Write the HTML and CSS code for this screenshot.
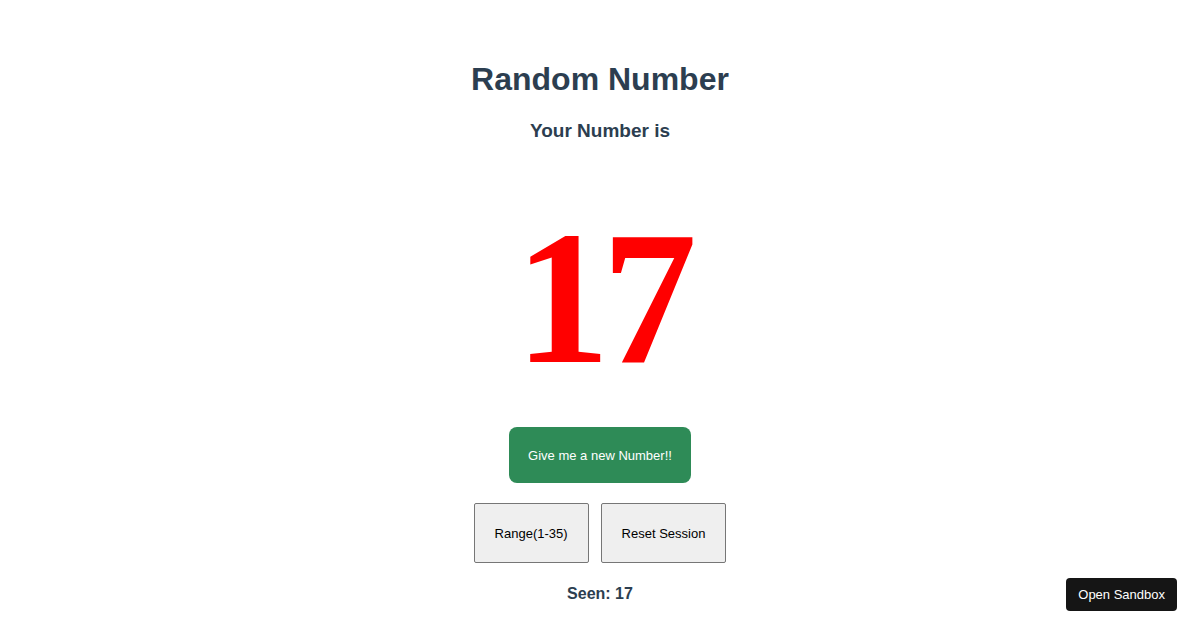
FILE: index.html
```html
<!DOCTYPE html>
<html lang="en">

<head>
    <meta charset="UTF-8">
    <meta name="viewport" content="width=device-width, initial-scale=1.0">
    <title>Random Number</title>
    <link rel="stylesheet" href="styles.css">
</head>

<body>
    <div class="app">
        <h1>Random Number</h1>
        <h3>Your Number is</h3>

        <div class="number" id="number">17</div>

        <button class="btn-new" id="newBtn">Give me a new Number!!</button>

        <div class="actions">
            <button class="btn-plain" id="rangeBtn">Range(1-35)</button>
            <button class="btn-plain" id="resetBtn">Reset Session</button>
        </div>

        <div class="seen" id="seen">Seen: 17</div>
    </div>

    <a class="sandbox" href="#">Open Sandbox</a>
</body>

</html>
```

FILE: styles.css
```css
body {
    margin: 0;
    font-family: "Liberation Sans", Arial, sans-serif;
    background-color: #fff;
}

.app {
    display: flex;
    flex-direction: column;
    align-items: center;
    padding-top: 56px;
}

h1 {
    margin: 0;
    font-size: 32px;
    line-height: 46px;
    color: #2c3e50;
}

h3 {
    margin: 17px 0 0;
    font-size: 19px;
    line-height: 24px;
    color: #2c3e50;
}

.number {
    margin-top: 55px;
    padding-left: 4px;
    font-family: "Liberation Serif", "Times New Roman", serif;
    font-weight: bold;
    font-size: 190px;
    line-height: 200px;
    letter-spacing: -8px;
    color: #ff0000;
}

.btn-new {
    margin-top: 29px;
    width: 182px;
    height: 56px;
    background-color: #2e8b57;
    color: #fff;
    border: none;
    border-radius: 8px;
    font-family: "Liberation Sans", Arial, sans-serif;
    font-size: 13px;
    cursor: pointer;
}

.actions {
    display: flex;
    gap: 12px;
    margin-top: 20px;
}

.btn-plain {
    height: 60px;
    padding: 0 20px;
    background-color: #efefef;
    color: #000;
    border: 1px solid #767676;
    border-radius: 2px;
    font-family: "Liberation Sans", Arial, sans-serif;
    font-size: 13px;
    cursor: pointer;
}

.seen {
    margin-top: 22px;
    font-size: 16px;
    font-weight: bold;
    color: #2c3e50;
}

.sandbox {
    position: fixed;
    right: 23px;
    bottom: 19px;
    padding: 9px 12px;
    background-color: #151515;
    color: #fff;
    border-radius: 4px;
    font-size: 13px;
    text-decoration: none;
}
```
